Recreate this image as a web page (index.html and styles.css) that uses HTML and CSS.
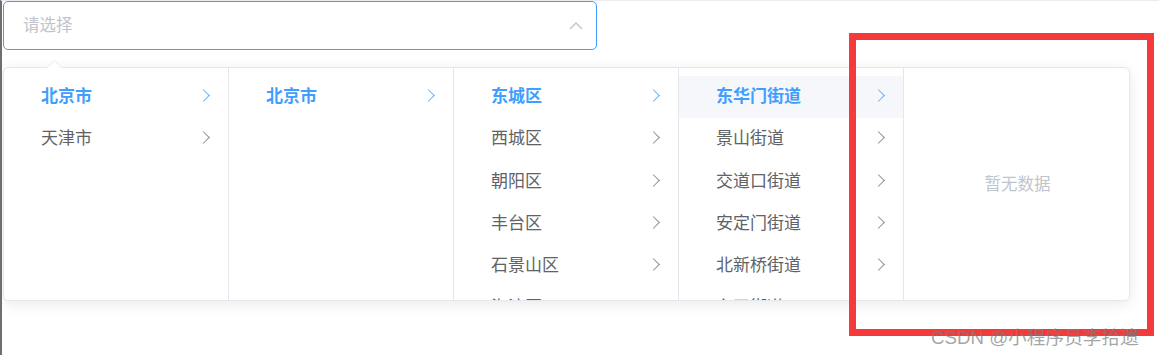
FILE: index.html
```html
<!DOCTYPE html>
<html lang="zh-CN">
<head>
    <meta charset="UTF-8">
    <title>级联选择</title>
    <link rel="stylesheet" href="styles.css">
</head>
<body>
    <div class="page">
        <div class="select">
            <span class="placeholder">请选择</span>
            <svg class="select-arrow" width="14" height="8" viewBox="0 0 14 8">
                <path d="M1 7 L7 1 L13 7" fill="none" stroke="#c0c4cc" stroke-width="1.3"/>
            </svg>
        </div>

        <div class="panel">
            <div class="popper-arrow"></div>

            <div class="menu">
                <ul class="menu-list">
                    <li class="node active">北京市<i class="chevron"></i></li>
                    <li class="node">天津市<i class="chevron"></i></li>
                </ul>
            </div>
            <div class="menu">
                <ul class="menu-list">
                    <li class="node active">北京市<i class="chevron"></i></li>
                </ul>
            </div>
            <div class="menu">
                <ul class="menu-list">
                    <li class="node active">东城区<i class="chevron"></i></li>
                    <li class="node">西城区<i class="chevron"></i></li>
                    <li class="node">朝阳区<i class="chevron"></i></li>
                    <li class="node">丰台区<i class="chevron"></i></li>
                    <li class="node">石景山区<i class="chevron"></i></li>
                    <li class="node">海淀区<i class="chevron"></i></li>
                </ul>
            </div>
            <div class="menu">
                <ul class="menu-list">
                    <li class="node active hover">东华门街道<i class="chevron"></i></li>
                    <li class="node">景山街道<i class="chevron"></i></li>
                    <li class="node">交道口街道<i class="chevron"></i></li>
                    <li class="node">安定门街道<i class="chevron"></i></li>
                    <li class="node">北新桥街道<i class="chevron"></i></li>
                    <li class="node">东四街道<i class="chevron"></i></li>
                </ul>
            </div>
            <div class="menu empty">
                <span class="empty-text">暂无数据</span>
            </div>
        </div>

        <div class="highlight-box"></div>
        <div class="watermark">CSDN @小程序员李拾遗</div>
    </div>
</body>
</html>
```

FILE: styles.css
```css
body {
    margin: 0;
    background: #fff;
    font-family: "Noto Sans CJK SC", "Noto Sans", sans-serif;
    color: #606266;
}

.page {
    position: relative;
    height: 354px;
    padding-left: 1px;
    border-left: 2px solid #6f6f6f;
    border-top: 1px solid #ececec;
    overflow: hidden;
}

.select {
    width: 594px;
    height: 49px;
    box-sizing: border-box;
    border: 1px solid #409eff;
    border-radius: 5px;
    display: flex;
    align-items: center;
    justify-content: space-between;
    padding: 0 13px 0 19px;
}

.placeholder {
    font-size: 16.5px;
    color: #c0c4cc;
    padding-bottom: 4px;
}

.select-arrow {
    display: block;
}

.panel {
    position: relative;
    display: flex;
    width: 1127px;
    height: 234px;
    box-sizing: border-box;
    margin-top: 17px;
    border: 1px solid #e4e7ed;
    border-radius: 5px;
    background: #fff;
    box-shadow: 0 3px 14px rgba(0, 0, 0, 0.09);
}

.popper-arrow {
    position: absolute;
    top: -6px;
    left: 45px;
    width: 10px;
    height: 10px;
    background: #fff;
    border-top: 1px solid #ebeef5;
    border-left: 1px solid #ebeef5;
    transform: rotate(45deg);
}

.menu {
    width: 225px;
    box-sizing: border-box;
    border-right: 1px solid #e4e7ed;
    overflow: hidden;
}

.menu:last-child {
    border-right: none;
}

.menu-list {
    list-style: none;
    margin: 0;
    padding: 8px 0 0;
}

.node {
    position: relative;
    height: 42.3px;
    line-height: 38.6px;
    padding-left: 37px;
    font-size: 17px;
    color: #606266;
}

.node.active {
    color: #409eff;
    font-weight: bold;
}

.node.hover {
    background: #f5f7fa;
}

.chevron {
    position: absolute;
    right: 20px;
    top: 15px;
    width: 8px;
    height: 8px;
    border-top: 1.3px solid #8e9097;
    border-right: 1.3px solid #8e9097;
    transform: rotate(45deg);
}

.node.active .chevron {
    border-color: #66b1ff;
}

.empty {
    display: flex;
    align-items: center;
    justify-content: center;
}

.empty-text {
    font-size: 16.5px;
    color: #c0c4cc;
    padding: 0 0 2px 2px;
}

.highlight-box {
    position: absolute;
    left: 847px;
    top: 32px;
    width: 305px;
    height: 303px;
    box-sizing: border-box;
    border: 7px solid #f43a3a;
}

.watermark {
    position: absolute;
    left: 929px;
    top: 321px;
    font-family: "Liberation Sans", "Noto Sans CJK SC", sans-serif;
    font-size: 18.7px;
    color: rgba(125, 125, 125, 0.7);
    white-space: nowrap;
}
```
